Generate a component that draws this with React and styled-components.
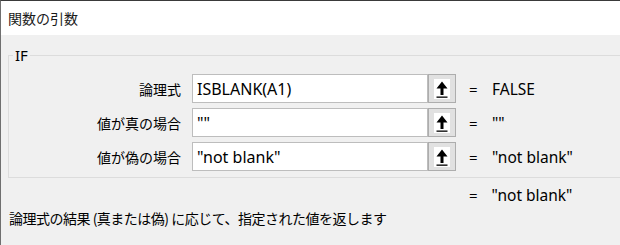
import React from "react";
import styled, { createGlobalStyle } from "styled-components";

const GlobalStyle = createGlobalStyle`
  html, body {
    margin: 0;
    padding: 0;
    overflow: hidden;
    background: #2b2b2b;
  }
  body {
    font-family: "Noto Sans", "Noto Sans CJK JP", sans-serif;
    color: #000;
  }
`;

const args = [
  { label: "論理式", value: "ISBLANK(A1)", result: "FALSE" },
  { label: "値が真の場合", value: '""', result: '""' },
  { label: "値が偽の場合", value: '"not blank"', result: '"not blank"' },
];

const App = () => {
  return (
    <>
      <GlobalStyle />
      <Window>
        <TitleBar>関数の引数</TitleBar>
        <Body>
          <Group>
            <Legend>IF</Legend>
            <Rows>
              {args.map((a) => (
                <Row key={a.label}>
                  <Label>{a.label}</Label>
                  <Field>
                    <Input readOnly value={a.value} />
                    <RefButton type="button">
                      <ArrowIcon />
                    </RefButton>
                  </Field>
                  <Equals>=</Equals>
                  <Result>{a.result}</Result>
                </Row>
              ))}
            </Rows>
          </Group>
          <FormulaResult>
            <Equals>=</Equals>
            <Result>"not blank"</Result>
          </FormulaResult>
          <Description>
            論理式の結果 (真または偽) に応じて、指定された値を返します
          </Description>
        </Body>
      </Window>
    </>
  );
};

const ArrowIcon = () => (
  <ArrowBox>
    <svg width="16" height="20" viewBox="0 0 16 20">
      <path d="M8 2.5 L2.5 9.5 H6.5 V16 H9.5 V9.5 H13.5 Z" fill="#000" />
      <rect x="2.5" y="17.5" width="11" height="1.3" fill="#000" />
    </svg>
  </ArrowBox>
);

export default App;

const Window = styled.div`
  width: 660px;
  height: 245px;
  background: #f0f0f0;
  border-top: 1px solid #3a3a3a;
  border-left: 1px solid #6f6f6f;
  box-sizing: border-box;
  display: flex;
  flex-direction: column;
`;

const TitleBar = styled.div`
  height: 34px;
  flex: none;
  background: #fff;
  display: flex;
  align-items: center;
  padding-left: 7px;
  font-family: "Noto Sans CJK JP", sans-serif;
  font-size: 14px;
  color: #1a1a1a;
`;

const Body = styled.div`
  padding: 10px 8px 0 7px;
  display: flex;
  flex-direction: column;
`;

const Group = styled.fieldset`
  margin: 0;
  padding: 9px 0 6px 0;
  border: 1px solid #dcdcdc;
  min-width: 0;
`;

const Legend = styled.legend`
  margin-left: 4px;
  padding: 0 2px;
  font-size: 15px;
  line-height: 20px;
  color: #000;
`;

const Rows = styled.div`
  display: flex;
  flex-direction: column;
  gap: 5px;
`;

const Row = styled.div`
  display: grid;
  grid-template-columns: 172px 264px 14px auto;
  column-gap: 11px;
  align-items: center;
  height: 29px;
`;

const Label = styled.div`
  text-align: right;
  font-family: "Noto Sans CJK JP", sans-serif;
  font-size: 14px;
  line-height: 20px;
`;

const Field = styled.div`
  display: flex;
  height: 29px;
`;

const Input = styled.input`
  width: 236px;
  height: 29px;
  box-sizing: border-box;
  border: 1px solid #bdbdbd;
  background: #fff;
  padding: 0 4px;
  margin: 0;
  font-family: "Noto Sans", "Noto Sans CJK JP", sans-serif;
  font-size: 16px;
  color: #000;
  outline: none;
`;

const RefButton = styled.button`
  width: 28px;
  height: 29px;
  box-sizing: border-box;
  margin: 0;
  padding: 0;
  border: 1px solid #adadad;
  background: #e1e1e1;
  display: flex;
  align-items: center;
  justify-content: center;
`;

const ArrowBox = styled.span`
  display: block;
  width: 16px;
  height: 20px;
  background: #fff;
  svg {
    display: block;
  }
`;

const Equals = styled.div`
  font-size: 15px;
  line-height: 20px;
  margin-left: 2px;
`;

const Result = styled.div`
  font-size: 15.5px;
  line-height: 20px;
  white-space: nowrap;
`;

const FormulaResult = styled.div`
  display: flex;
  align-items: center;
  gap: 14px;
  padding-left: 459px;
  margin-top: 7px;
  height: 20px;
`;

const Description = styled.div`
  margin-top: 3px;
  font-family: "Noto Sans CJK JP", sans-serif;
  font-size: 14px;
  letter-spacing: -0.5px;
  line-height: 20px;
  padding-left: 1px;
`;
